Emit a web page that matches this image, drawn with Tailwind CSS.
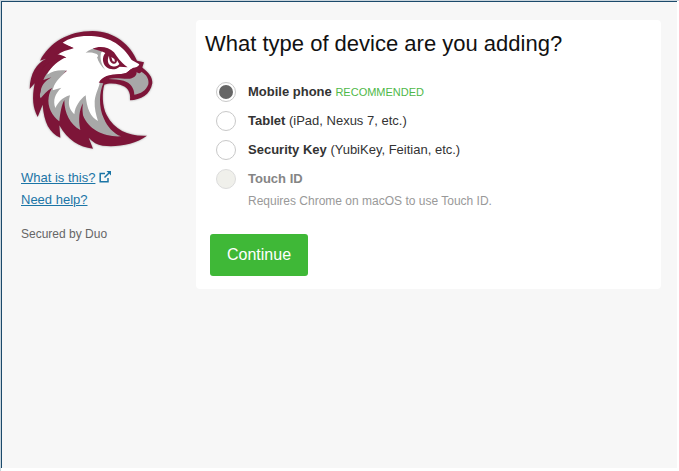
<!DOCTYPE html>
<html lang="en">
<head>
    <meta charset="UTF-8">
    <title>Add a device</title>
    <meta name="viewport" content="width=device-width, initial-scale=1.0" />
    <script src="https://cdn.jsdelivr.net/npm/@tailwindcss/browser@4"></script>
</head>
<body class="bg-white font-['Liberation_Sans',Arial,sans-serif] text-[13px] text-[#333333]">
    <div class="min-h-screen flex flex-col pr-0.5 pb-[3px] border-t border-l border-[#c9d5dd]">
        <div class="grow flex items-start border-t border-l border-[#1c4a6b] bg-[#f7f7f7] pt-[18px] pr-4 pl-[18px]">

            <!-- sidebar -->
            <aside class="w-44 shrink-0">
                <svg class="size-[140px] drop-shadow-[0_0_1px_rgb(0_0_0/0.35)]" viewBox="0 0 420 420" role="img" aria-label="Eagle logo">
                    <path fill="#7d1538" d="M60 122C88 68 145 33 218 33C285 33 333 78 351 122L372 127L366 145C386 156 398 172 397 190C391 225 362 240 330 241C333 215 322 200 300 194C283 189 265 189 253 194C246 215 246 258 260 285C285 333 330 350 381 347C345 374 290 382 248 377C232 375 218 366 206 353L219 386C178 382 143 360 118 316L121 353C88 338 72 308 68 254L53 291C39 265 35 235 44 190L29 207C30 160 50 130 78 116Z"/>
                    <path fill="#a8a8a8" d="M62 212C57 175 72 148 101 138L140 150L120 175L250 190C238 215 235 262 252 296C262 320 280 340 303 349C255 352 205 330 189 286C187 270 187 260 189 250C178 270 174 298 181 330C150 313 133 280 133 240C125 255 120 280 118 304C97 290 81 260 86 232C88 218 92 212 96 204C80 212 70 225 62 235C58 228 60 220 62 212Z"/>
                    <path fill="#7d1538" d="M55 200C52 165 66 135 100 120L125 122C100 138 80 155 70 180L94 172C72 186 64 196 60 222Z"/>
                    <path fill="#fff" d="M128 68C150 52 185 45 224 49C282 54 316 88 335 120L358 133C352 146 338 142 329 151L318 160L262 168L240 184C239 200 226 220 224 244C223 266 228 285 234 303C212 292 200 266 197 226C181 238 165 258 163 283C147 268 143 250 150 226C128 232 115 246 106 264C98 240 105 222 124 203L98 211C102 190 114 176 141 152C118 149 98 153 81 164C95 138 115 122 138 112L112 105C125 95 140 91 161 85Z"/>
                    <path fill="#7d1538" d="M94 88C110 76 130 70 161 84C136 84 119 90 103 103C116 101 128 106 139 113C118 114 90 120 68 144Z"/>
                    <!-- eye -->
                    <path fill="#a8a8a8" d="M197 98C213 84 232 80 252 85L243 99C239 118 245 135 256 150C244 139 235 127 231 111C237 109 234 103 228 101C216 96 207 97 197 98Z"/>
                    <path fill="#7d1538" d="M218 86C240 77 266 81 282 97C292 110 300 126 323 142L299 140C288 150 270 150 259 141C246 129 246 111 256 99C247 93 232 91 218 86Z"/>
                    <path fill="#fff" d="M267 107C260 121 264 135 277 139C287 141 294 138 298 132L291 121C291 129 286 133 279 131C270 127 267 118 267 107Z"/>
                    <path fill="#fff" d="M274 111L283 117L285 125L278 124Z"/>
                    <!-- beak -->
                    <path fill="#7d1538" d="M236 189C247 168 266 163 304 162C322 161 326 151 340 143L366 142C380 153 388 165 386 181L330 198L288 181L260 180Z"/>
                    <path fill="#a8a8a8" d="M265 177C286 171 312 178 330 176C345 173 350 165 350 156C356 162 362 160 363 155C380 163 388 178 385 193C378 212 362 222 343 224C343 204 331 188 311 182C296 178 281 179 265 177Z"/>
                </svg>
                <ul class="mt-[7px] pl-px leading-[22px]">
                    <li>
                        <a href="#" class="text-[#1b75a6] underline">What is this?</a>
                        <svg class="inline size-3 mb-1" viewBox="0 0 12 12" fill="none" stroke="#1b75a6" stroke-width="1.5" aria-hidden="true">
                            <path d="M6 2.5H1.2V10.8H9V7M5.5 6.5L10 2"/>
                            <path fill="#1b75a6" stroke="none" d="M7.5 0H12V4.5Z"/>
                        </svg>
                    </li>
                    <li><a href="#" class="text-[#1b75a6] underline">Need help?</a></li>
                </ul>
                <p class="mt-3 pl-px text-xs leading-[22px] text-[#666666]">Secured by Duo</p>
            </aside>

            <!-- device form -->
            <main class="grow bg-white rounded-sm px-[9px] pt-3 pb-[13px]">
                <h1 class="text-[22px] leading-6 text-[#111111]">What type of device are you adding?</h1>
                <form class="mt-[26px] pl-[5px]">
                    <div class="flex flex-col gap-[9px] pl-1.5 leading-5">
                        <div class="flex items-center gap-3">
                            <input type="radio" name="device" id="phone" checked class="appearance-none size-5 shrink-0 rounded-full border border-[#c8c8c8] bg-white bg-clip-content p-0.5 checked:bg-[#666666]">
                            <label for="phone"><b>Mobile phone</b> <span class="text-[11px] text-[#4fb848]">RECOMMENDED</span></label>
                        </div>
                        <div class="flex items-center gap-3">
                            <input type="radio" name="device" id="tablet" class="appearance-none size-5 shrink-0 rounded-full border border-[#c8c8c8] bg-white bg-clip-content p-0.5 checked:bg-[#666666]">
                            <label for="tablet"><b>Tablet</b> (iPad, Nexus 7, etc.)</label>
                        </div>
                        <div class="flex items-center gap-3">
                            <input type="radio" name="device" id="key" class="appearance-none size-5 shrink-0 rounded-full border border-[#c8c8c8] bg-white bg-clip-content p-0.5 checked:bg-[#666666]">
                            <label for="key"><b>Security Key</b> (YubiKey, Feitian, etc.)</label>
                        </div>
                        <div class="flex items-center gap-3">
                            <input type="radio" name="device" id="touch" disabled aria-describedby="touch-note" class="appearance-none size-5 shrink-0 rounded-full border border-[#dcdcdc] bg-[#f0f0eb]">
                            <label for="touch" class="font-bold text-[#858585]">Touch ID</label>
                        </div>
                    </div>
                    <p id="touch-note" class="mt-0.5 pl-[38px] text-xs leading-5 text-[#999999]">Requires Chrome on macOS to use Touch ID.</p>
                    <button type="submit" class="mt-[23px] h-[42px] px-[17px] rounded-[3px] bg-[#3fb837] text-base text-white">Continue</button>
                </form>
            </main>
        </div>
    </div>
</body>
</html>
